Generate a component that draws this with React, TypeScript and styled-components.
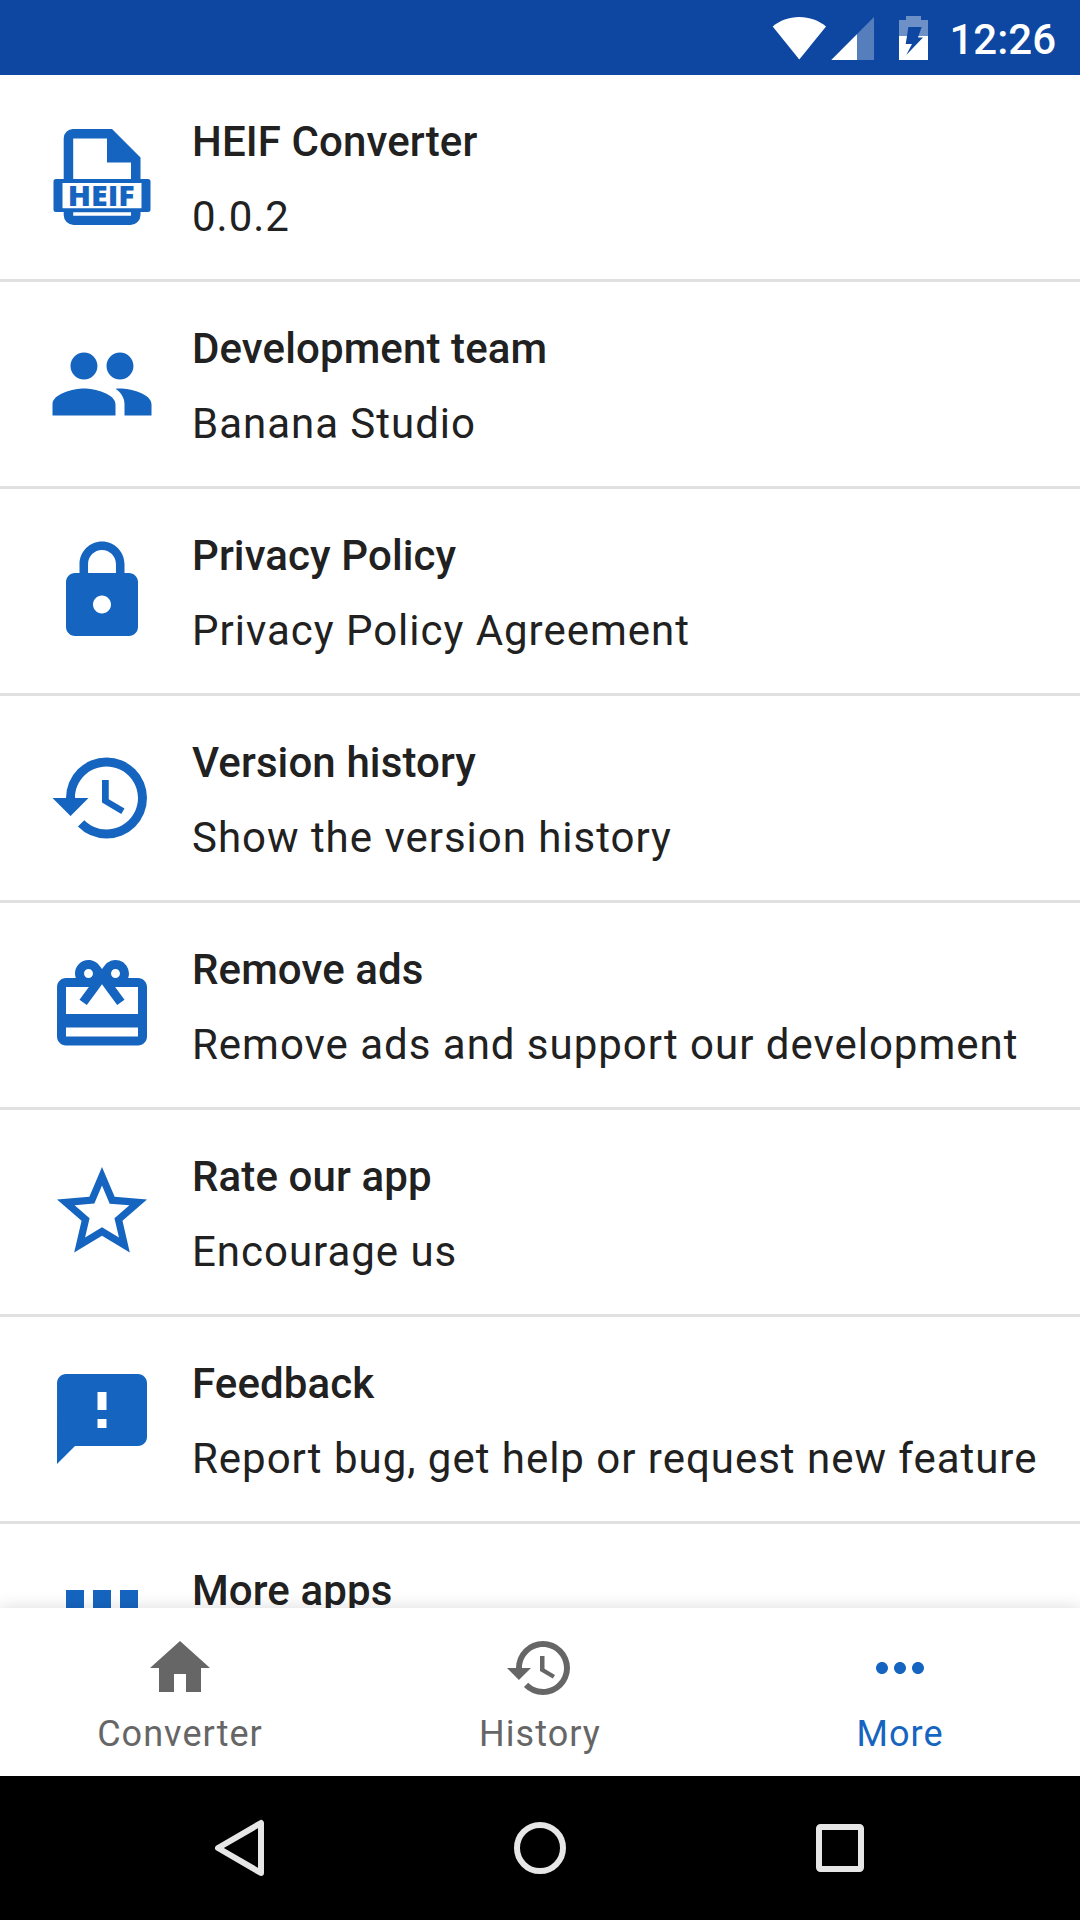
import React from "react";
import styled, { createGlobalStyle } from "styled-components";
import {
  MdApps,
  MdFeedback,
  MdHistory,
  MdHome,
  MdLock,
  MdMoreHoriz,
  MdPeople,
  MdRedeem,
  MdStarBorder,
} from "react-icons/md";

const color = {
  statusBar: "#0d47a1",
  primary: "#1565c0",
  text: "#212121",
  inactive: "#666666",
  divider: "#e0e0e0",
  systemButton: "#e6e6e6",
};

const GlobalStyle = createGlobalStyle`
  *, *::before, *::after { box-sizing: border-box; }
  body { margin: 0; background: #fff; }
`;

const Screen = styled.div`
  display: flex;
  flex-direction: column;
  width: 1080px;
  height: 1920px;
  overflow: hidden;
  background: #fff;
  color: ${color.text};
  font-family: Roboto, "Noto Sans", sans-serif;
`;

const StatusBar = styled.header`
  display: flex;
  flex: none;
  align-items: center;
  justify-content: flex-end;
  height: 75px;
  padding-right: 24px;
  background: ${color.statusBar};
  color: #fff;
`;

const StatusIcons = styled.div`
  display: flex;
  flex: none;
  margin-right: 19px;
`;

const Clock = styled.time`
  font-size: 42px;
  font-weight: 500;
  line-height: 50px;
  padding-top: 4px;
`;

const List = styled.main`
  flex: 1;
  min-height: 0;
  overflow: hidden;
`;

const Row = styled.section`
  display: flex;
  align-items: center;
  height: 207px;
  padding: 0 32px 0 48px;
  border-bottom: 3px solid ${color.divider};
`;

const RowIcon = styled.div`
  display: flex;
  flex: none;
  width: 108px;
  height: 108px;
  margin-right: 36px;
  color: ${color.primary};
`;

const RowText = styled.div`
  display: flex;
  flex-direction: column;
  gap: 25px;
  padding-top: 4px;
  white-space: nowrap;
`;

const Title = styled.h2`
  margin: 0;
  font-size: 42px;
  font-weight: 500;
  line-height: 50px;
  letter-spacing: 0.11px;
`;

const Subtitle = styled.p`
  margin: 0;
  font-size: 42px;
  line-height: 50px;
  letter-spacing: 0.98px;
`;

const Tabs = styled.nav`
  display: grid;
  flex: none;
  grid-template-columns: repeat(3, 1fr);
  height: 168px;
  background: #fff;
  box-shadow: 0 0 16px rgba(0, 0, 0, 0.15);
  position: relative;
`;

const Tab = styled.div<{ $active?: boolean }>`
  display: flex;
  flex-direction: column;
  align-items: center;
  gap: 9px;
  padding-top: 24px;
  color: ${(p) => (p.$active ? color.primary : color.inactive)};
`;

const TabLabel = styled.span`
  font-size: 36px;
  line-height: 42px;
  letter-spacing: 1.05px;
`;

const SystemBar = styled.footer`
  display: flex;
  flex: none;
  align-items: center;
  justify-content: space-between;
  height: 144px;
  padding: 0 204px;
  background: #000;
`;

const HeifIcon = () => (
  <svg width="108" height="108" viewBox="0 0 108 108" fill="currentColor">
    <path
      fillRule="evenodd"
      d="M25 6H64L92.500 34.500V57H15.700V15.500A9.500 9.500 0 0 1 25 6ZM25.200 15.500V57H83V39.500H59V15.500Z"
    />
    <path
      fillRule="evenodd"
      d="M15.700 88H92.500V92A10 10 0 0 1 82.500 102H25.700A10 10 0 0 1 15.700 92ZM25.200 89.300V92.700H83V89.300Z"
    />
    <path
      fillRule="evenodd"
      d="M8 56H100A2.500 2.500 0 0 1 102.500 58.500V86.500A2.500 2.500 0 0 1 100 89H8A2.500 2.500 0 0 1 5.500 86.500V58.500A2.500 2.500 0 0 1 8 56ZM14.500 60V85.300H93.500V60Z"
    />
    <text
      x="53.200"
      y="83"
      textAnchor="middle"
      textLength="67"
      lengthAdjust="spacingAndGlyphs"
      fontFamily="'Open Sans', sans-serif"
      fontSize="28"
      fontWeight="800"
    >
      HEIF
    </text>
  </svg>
);

const StatusGlyphs = () => (
  <svg width="158" height="46" viewBox="772 14 158 46" fill="#fff">
    <path d="M799.300 58.500L772.700 25.400C780 19.500 789 16 799.300 16S818.600 19.500 826 25.400Z" />
    <path d="M874 16V59H831.300Z" fillOpacity="0.300" />
    <path d="M857 33.200V59H831.300Z" />
    <path
      fillOpacity="0.400"
      d="M899 35V19H906V15H921V19H928V35H918.500L921.700 26H908.300L907 35Z"
    />
    <path d="M899 35H907L905.700 43H912L906.300 54L923 36.500H918L918.500 35H928V59H899Z" />
  </svg>
);

const rows = [
  { icon: <HeifIcon />, title: "HEIF Converter", subtitle: "0.0.2" },
  { icon: <MdPeople size={108} />, title: "Development team", subtitle: "Banana Studio" },
  { icon: <MdLock size={108} />, title: "Privacy Policy", subtitle: "Privacy Policy Agreement" },
  { icon: <MdHistory size={108} />, title: "Version history", subtitle: "Show the version history" },
  { icon: <MdRedeem size={108} />, title: "Remove ads", subtitle: "Remove ads and support our development" },
  { icon: <MdStarBorder size={108} />, title: "Rate our app", subtitle: "Encourage us" },
  { icon: <MdFeedback size={108} />, title: "Feedback", subtitle: "Report bug, get help or request new feature" },
  { icon: <MdApps size={108} />, title: "More apps", subtitle: "" },
];

export default function App() {
  return (
    <Screen>
      <GlobalStyle />
      <StatusBar>
        <StatusIcons>
          <StatusGlyphs />
        </StatusIcons>
        <Clock>12:26</Clock>
      </StatusBar>
      <List>
        {rows.map((row) => (
          <Row key={row.title}>
            <RowIcon>{row.icon}</RowIcon>
            <RowText>
              <Title>{row.title}</Title>
              <Subtitle>{row.subtitle || "\u00a0"}</Subtitle>
            </RowText>
          </Row>
        ))}
      </List>
      <Tabs>
        <Tab>
          <MdHome size={72} />
          <TabLabel>Converter</TabLabel>
        </Tab>
        <Tab>
          <MdHistory size={72} />
          <TabLabel>History</TabLabel>
        </Tab>
        <Tab $active>
          <MdMoreHoriz size={72} />
          <TabLabel>More</TabLabel>
        </Tab>
      </Tabs>
      <SystemBar>
        <svg width="72" height="72" viewBox="0 0 72 72" fill="none" stroke={color.systemButton} strokeWidth="6" strokeLinejoin="round">
          <path d="M57 11V61L14 36Z" />
        </svg>
        <svg width="72" height="72" viewBox="0 0 72 72" fill="none" stroke={color.systemButton} strokeWidth="6">
          <circle cx="36" cy="36" r="23" />
        </svg>
        <svg width="72" height="72" viewBox="0 0 72 72" fill="none" stroke={color.systemButton} strokeWidth="6">
          <rect x="15" y="15" width="42" height="42" rx="1.500" />
        </svg>
      </SystemBar>
    </Screen>
  );
}
